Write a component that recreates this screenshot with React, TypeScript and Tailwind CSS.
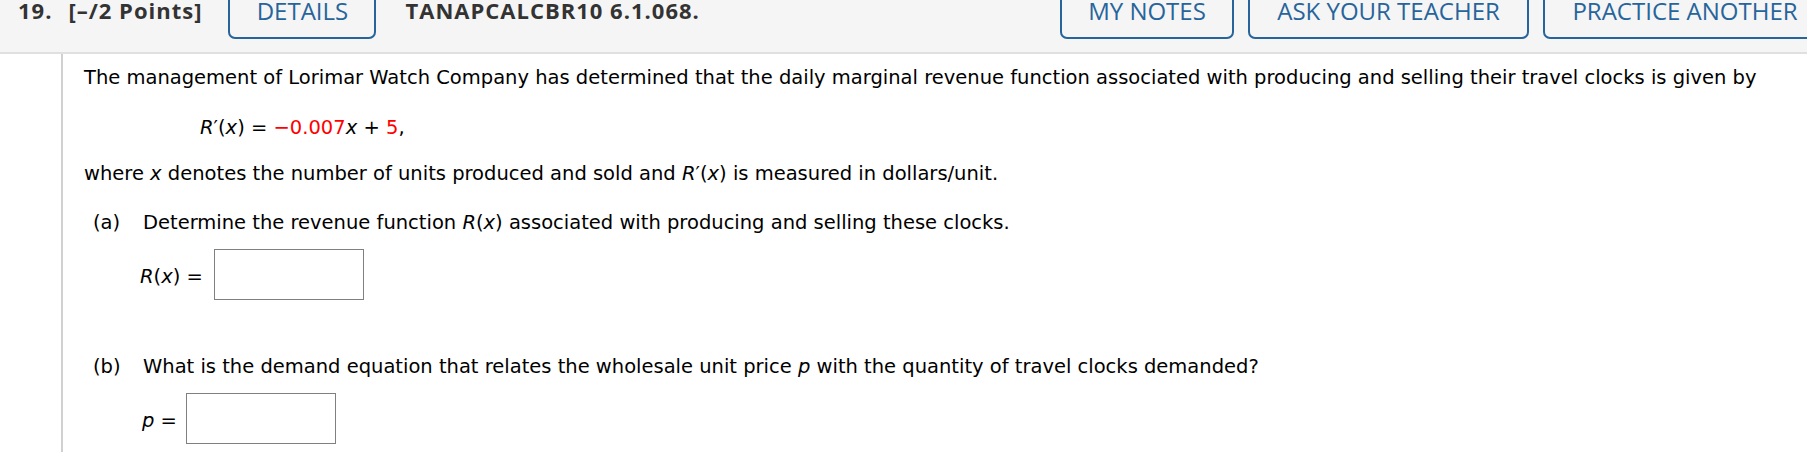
import React from "react";

const red = "text-[#ff0000]";

function TopButton({ label, width }: { label: string; width: string }) {
  return (
    <button
      className={`${width} -mt-[20px] h-[59px] shrink-0 flex items-end justify-center pb-[16px] border-2 border-[#27649b] rounded-b-[7px] bg-[#f5f5f5] text-[24px] leading-[20px] text-[#27649b] font-['Open_Sans',sans-serif]`}
    >
      {label}
    </button>
  );
}

function AnswerBox({ className = "" }: { className?: string }) {
  return <div className={`w-[150px] h-[51px] border border-[#808080] bg-white ${className}`} />;
}

const App = () => {
  return (
    <div className="w-[1807px] h-[452px] bg-white overflow-hidden">
      <header className="h-[54px] bg-[#f5f5f5] border-b-2 border-[#e0e0e0] flex items-start overflow-hidden font-['Open_Sans',sans-serif] text-[#333]">
        <span className="ml-[18px] text-[22px] tracking-[1px] font-bold leading-[20px]">19.</span>
        <span className="ml-[16px] text-[22px] tracking-[1px] font-bold leading-[20px]">[–/2 Points]</span>
        <div className="ml-[26px]">
          <TopButton label="DETAILS" width="w-[148px]" />
        </div>
        <span className="ml-[29px] text-[22px] tracking-[1px] font-bold leading-[20px]">TANAPCALCBR10 6.1.068.</span>
        <div className="ml-auto -mr-[20px] flex gap-[14px]">
          <TopButton label="MY NOTES" width="w-[174px]" />
          <TopButton label="ASK YOUR TEACHER" width="w-[281px]" />
          <TopButton label="PRACTICE ANOTHER" width="w-[284px]" />
        </div>
      </header>

      <div className="flex h-[398px]">
        <div className="w-[63px] shrink-0 border-r-2 border-[#d0d0d0]" />
        <main className="pl-[21px] pt-[12px] text-[19.5px] leading-[24px] text-black font-['DejaVu_Sans','Verdana',sans-serif]">
          <p>
            The management of Lorimar Watch Company has determined that the daily marginal revenue function associated
            with producing and selling their travel clocks is given by
          </p>
          <p className="mt-[26px] ml-[116px]">
            <i>R</i>′(<i>x</i>) = <span className={red}>−0.007</span>
            <i>x</i> + <span className={red}>5</span>,
          </p>
          <p className="mt-[22px]">
            where <i>x</i> denotes the number of units produced and sold and <i>R</i>′(<i>x</i>) is measured in
            dollars/unit.
          </p>

          <div className="mt-[25px] pl-[9px] flex">
            <span className="w-[50px] shrink-0">(a)</span>
            <span>
              Determine the revenue function <i>R</i>(<i>x</i>) associated with producing and selling these clocks.
            </span>
          </div>
          <div className="mt-[14px] pl-[56px] flex items-center">
            <span className="mt-[4px]">
              <i>R</i>(<i>x</i>) =
            </span>
            <AnswerBox className="ml-[11px]" />
          </div>

          <div className="mt-[55px] pl-[9px] flex">
            <span className="w-[50px] shrink-0">(b)</span>
            <span>
              What is the demand equation that relates the wholesale unit price <i>p</i> with the quantity of travel
              clocks demanded?
            </span>
          </div>
          <div className="mt-[14px] pl-[58px] flex items-center">
            <span className="mt-[4px]">
              <i>p</i> =
            </span>
            <AnswerBox className="ml-[9px]" />
          </div>
        </main>
      </div>
    </div>
  );
};

export default App;
